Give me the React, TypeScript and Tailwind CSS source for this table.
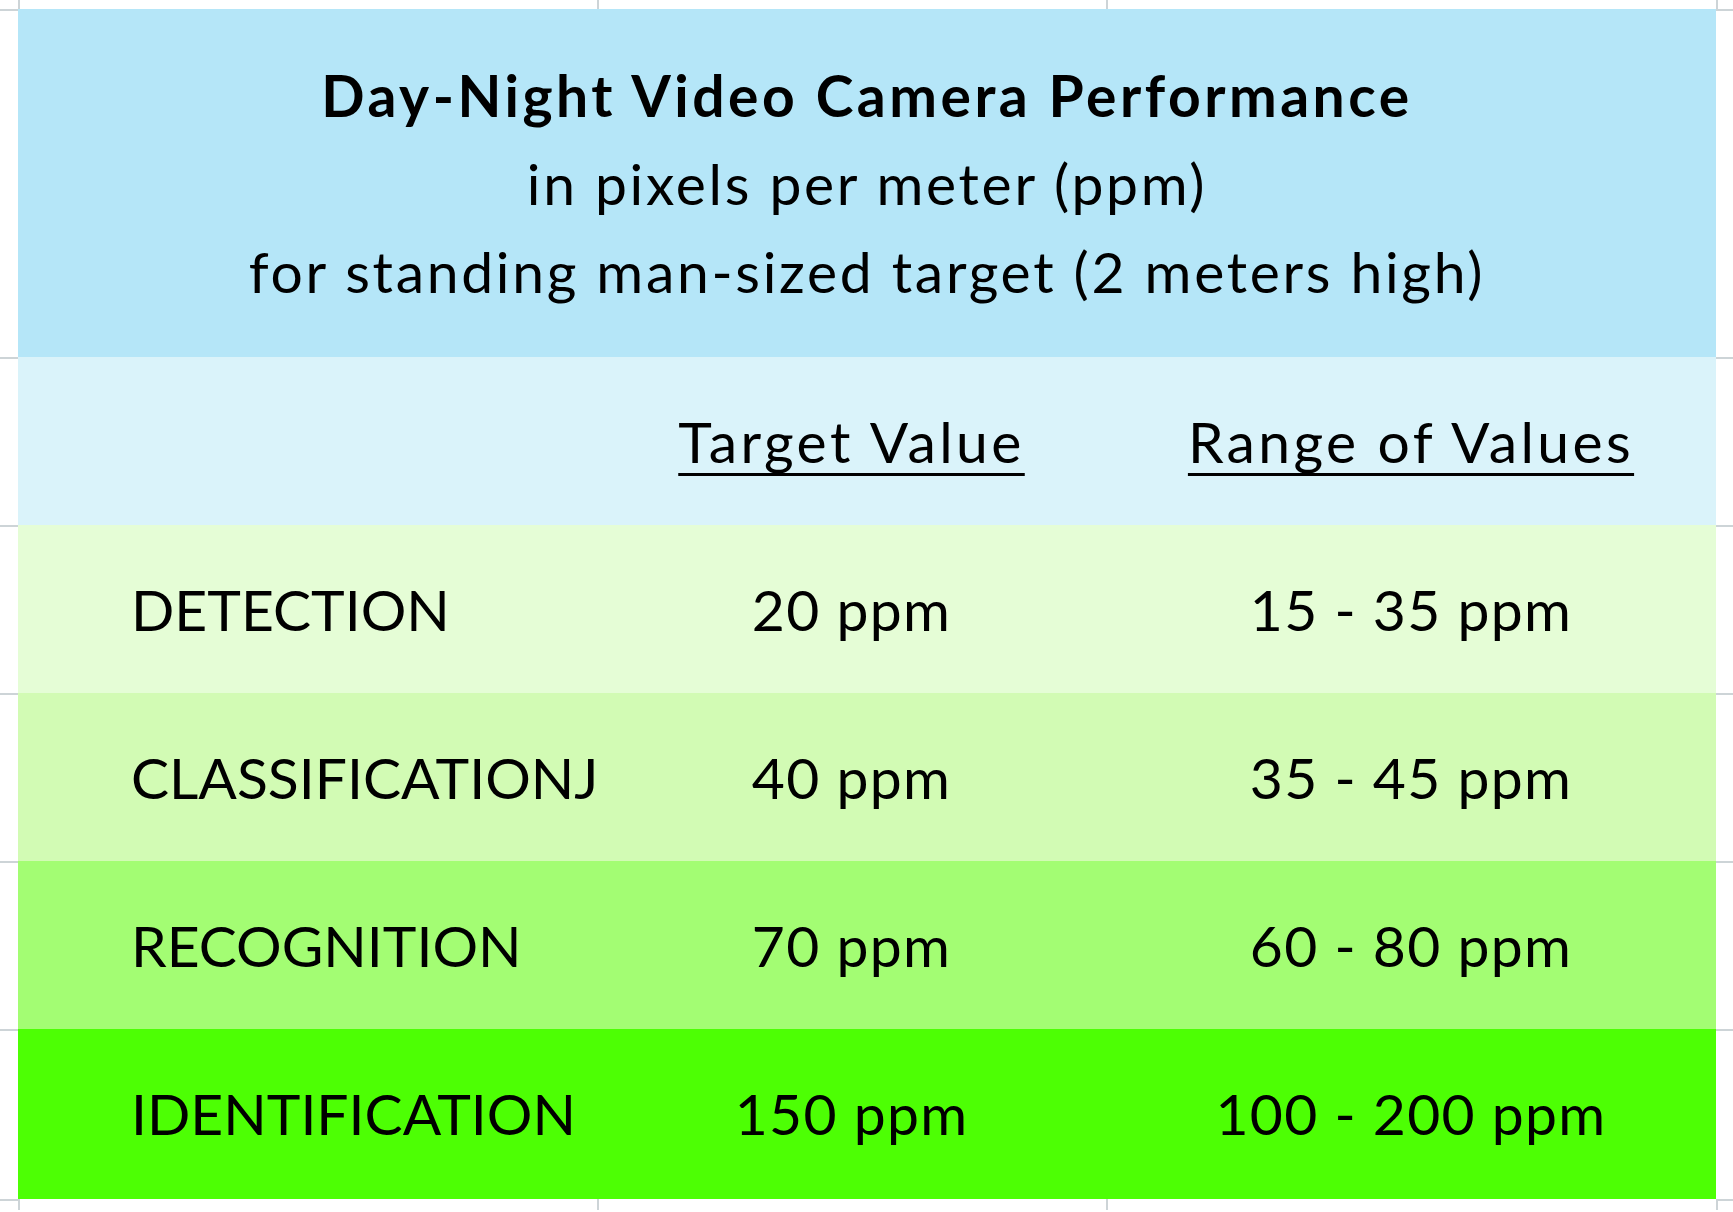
import React from "react";

const rows = [
  { label: "DETECTION", target: "20 ppm", range: "15 - 35 ppm", bg: "bg-[#e5fdd6]" },
  { label: "CLASSIFICATIONJ", target: "40 ppm", range: "35 - 45 ppm", bg: "bg-[#d2fbb4]" },
  { label: "RECOGNITION", target: "70 ppm", range: "60 - 80 ppm", bg: "bg-[#a3fd73]" },
  { label: "IDENTIFICATION", target: "150 ppm", range: "100 - 200 ppm", bg: "bg-[#4dff04]" },
];

function Margin({ right }: { right?: boolean }) {
  return <div className={`${right ? "w-[17px]" : "w-[18px]"} shrink-0 border-t-2 border-[#cdd4d7]`} />;
}

function Strip({ h, top }: { h: string; top?: boolean }) {
  return (
    <div className={`${h} flex shrink-0`}>
      <div className={`w-[18px] shrink-0 ${top ? "" : "border-t-2 border-[#cdd4d7]"}`} />
      <div className="w-[579px] shrink-0 border-l-2 border-[#cdd4d7]" />
      <div className="w-[509px] shrink-0 border-l-2 border-[#cdd4d7]" />
      <div className="w-[610px] shrink-0 border-l-2 border-[#cdd4d7]" />
      <div className={`w-[17px] shrink-0 border-l-2 border-[#cdd4d7] ${top ? "" : "border-t-2"}`} />
    </div>
  );
}

export default function App() {
  return (
    <div
      className="w-[1733px] h-[1212px] bg-white flex flex-col text-black overflow-hidden"
      style={{ fontFamily: "Lato, 'Open Sans', sans-serif" }}
    >
      <Strip h="h-[9px]" top />
      {/* Title band */}
      <div className="flex h-[348px] shrink-0">
        <Margin />
        <div className="w-[1698px] bg-[#b5e6f8] flex flex-col items-center pt-[42px] text-[57px] leading-[88px] tracking-[2.7px]">
          <div className="font-bold tracking-[3.5px]">Day-Night Video Camera Performance</div>
          <div>in pixels per meter (ppm)</div>
          <div>for standing man-sized target (2 meters high)</div>
        </div>
        <Margin right />
      </div>
      {/* Header row */}
      <div className="flex h-[168px] shrink-0">
        <Margin />
        <div className="w-[1698px] bg-[#daf3fa] flex text-[57px] leading-[168px] tracking-[3.4px]">
          <div className="w-[579px]" />
          <div className="w-[509px] text-center">
            <span className="underline decoration-[3px] underline-offset-[10px]">Target Value</span>
          </div>
          <div className="w-[610px] text-center">
            <span className="underline decoration-[3px] underline-offset-[10px]">Range of Values</span>
          </div>
        </div>
        <Margin right />
      </div>
      {rows.map((r) => (
        <div key={r.label} className="flex h-[168px] shrink-0">
          <Margin />
          <div className={`w-[1698px] ${r.bg} flex text-[57px] leading-[168px]`}>
            <div className="w-[579px] pl-[113px] whitespace-nowrap">{r.label}</div>
            <div className="w-[509px] text-center tracking-[1.3px]">{r.target}</div>
            <div className="w-[610px] text-center tracking-[1.3px]">{r.range}</div>
          </div>
          <Margin right />
        </div>
      ))}
      <div className="flex h-[2px] shrink-0">
        <div className="w-[18px]" />
        <div className="w-[1698px] bg-[#4dff04]" />
      </div>
      <Strip h="h-[11px]" />
    </div>
  );
}
